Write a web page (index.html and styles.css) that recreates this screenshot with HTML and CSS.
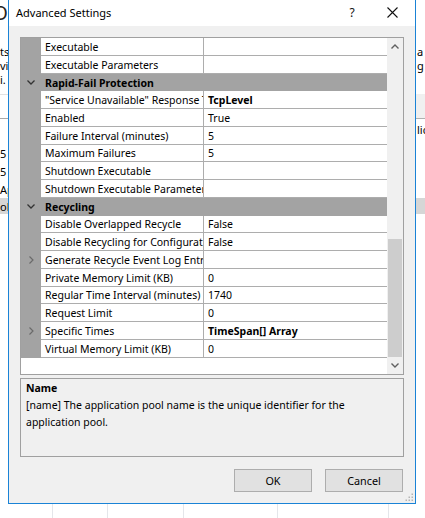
FILE: index.html
```html
<!DOCTYPE html>
<html>
<head>
<meta charset="utf-8">
<link rel="stylesheet" href="styles.css">
</head>
<body>
<div class="screen">
  <div class="bg">
    <div class="bgrow r1"><span class="l big">O</span></div>
    <div class="bgrow r2"></div>
    <div class="bgrow r3"><span class="l">ts</span><span class="r">a</span></div>
    <div class="bgrow r4"><span class="l">vi</span><span class="r">g</span></div>
    <div class="bgrow r5"><span class="l">i.</span></div>
    <div class="bgrow r6"></div>
    <div class="bgrow r7"><span class="l band-l"></span><span class="r band-r"></span></div>
    <div class="bgrow r8"><span class="l"></span><span class="r">lic</span></div>
    <div class="bgrow r9"></div>
    <div class="bgrow r10"><span class="l">5</span></div>
    <div class="bgrow r11"><span class="l">5</span></div>
    <div class="bgrow r12"><span class="l">Ap</span></div>
    <div class="bgrow r13"><span class="l">ol</span></div>
    <div class="bgrow r14"></div>
    <div class="bgrow r15">
      <span class="col c1"></span><span class="col c2"></span><span class="col c3"></span><span class="col c4"></span><span class="col c5"></span>
    </div>
  </div>

  <div class="dialog">
    <div class="titlebar">
      <span class="title">Advanced Settings</span>
      <span class="help">?</span>
      <span class="close">
        <svg width="11" height="11" viewBox="0 0 11 11"><path d="M0.5 0.5 L10.5 10.5 M10.5 0.5 L0.5 10.5" stroke="#111" stroke-width="1.1" fill="none"/></svg>
      </span>
    </div>
    <div class="body">
      <div class="pgrid">
        <div class="rows">
          <div class="row"><span class="gut"></span><span class="name">Executable</span><span class="val"></span></div>
          <div class="row"><span class="gut"></span><span class="name">Executable Parameters</span><span class="val"></span></div>
          <div class="row cat"><span class="gut"><svg width="8" height="5" viewBox="0 0 8 5"><polyline points="0.5,0.5 4,4 7.5,0.5" fill="none" stroke="#333" stroke-width="1.3"/></svg></span><span class="catname">Rapid-Fail Protection</span></div>
          <div class="row"><span class="gut"></span><span class="name">"Service Unavailable" Response Type</span><span class="val b">TcpLevel</span></div>
          <div class="row"><span class="gut"></span><span class="name">Enabled</span><span class="val">True</span></div>
          <div class="row"><span class="gut"></span><span class="name">Failure Interval (minutes)</span><span class="val">5</span></div>
          <div class="row"><span class="gut"></span><span class="name">Maximum Failures</span><span class="val">5</span></div>
          <div class="row"><span class="gut"></span><span class="name">Shutdown Executable</span><span class="val"></span></div>
          <div class="row"><span class="gut"></span><span class="name">Shutdown Executable Parameters</span><span class="val"></span></div>
          <div class="row cat"><span class="gut"><svg width="8" height="5" viewBox="0 0 8 5"><polyline points="0.5,0.5 4,4 7.5,0.5" fill="none" stroke="#333" stroke-width="1.3"/></svg></span><span class="catname">Recycling</span></div>
          <div class="row"><span class="gut"></span><span class="name">Disable Overlapped Recycle</span><span class="val">False</span></div>
          <div class="row"><span class="gut"></span><span class="name">Disable Recycling for Configuration Changes</span><span class="val">False</span></div>
          <div class="row"><span class="gut"><svg width="5" height="8" viewBox="0 0 5 8"><polyline points="0.5,0.5 4,4 0.5,7.5" fill="none" stroke="#6a6a6a" stroke-width="1.2"/></svg></span><span class="name">Generate Recycle Event Log Entry</span><span class="val"></span></div>
          <div class="row"><span class="gut"></span><span class="name">Private Memory Limit (KB)</span><span class="val">0</span></div>
          <div class="row"><span class="gut"></span><span class="name">Regular Time Interval (minutes)</span><span class="val">1740</span></div>
          <div class="row"><span class="gut"></span><span class="name">Request Limit</span><span class="val">0</span></div>
          <div class="row"><span class="gut"><svg width="5" height="8" viewBox="0 0 5 8"><polyline points="0.5,0.5 4,4 0.5,7.5" fill="none" stroke="#6a6a6a" stroke-width="1.2"/></svg></span><span class="name">Specific Times</span><span class="val b">TimeSpan[] Array</span></div>
          <div class="row"><span class="gut"></span><span class="name">Virtual Memory Limit (KB)</span><span class="val">0</span></div>
          <div class="filler"></div>
        </div>
        <div class="scrollbar">
          <div class="sbtn"><svg width="8" height="5" viewBox="0 0 8 5"><polyline points="0.5,4.5 4,1 7.5,4.5" fill="none" stroke="#606060" stroke-width="1.4"/></svg></div>
          <div class="track"><div class="thumb"></div></div>
          <div class="sbtn"><svg width="8" height="5" viewBox="0 0 8 5"><polyline points="0.5,0.5 4,4 7.5,0.5" fill="none" stroke="#606060" stroke-width="1.4"/></svg></div>
        </div>
      </div>
      <div class="desc">
        <div class="dtitle">Name</div>
        <div class="dtext">[name] The application pool name is the unique identifier for the<br>application pool.</div>
      </div>
      <div class="buttons">
        <button class="btn">OK</button>
        <button class="btn">Cancel</button>
      </div>
    </div>
    <svg class="grip" width="10" height="10" viewBox="0 0 10 10">
      <rect x="7.5" y="1.5" width="1.5" height="1.5" fill="#b5b5b5"/>
      <rect x="4.5" y="4.5" width="1.5" height="1.5" fill="#b5b5b5"/>
      <rect x="7.5" y="4.5" width="1.5" height="1.5" fill="#b5b5b5"/>
      <rect x="1.5" y="7.5" width="1.5" height="1.5" fill="#b5b5b5"/>
      <rect x="4.5" y="7.5" width="1.5" height="1.5" fill="#b5b5b5"/>
      <rect x="7.5" y="7.5" width="1.5" height="1.5" fill="#b5b5b5"/>
    </svg>
  </div>
</div>
</body>
</html>
```

FILE: styles.css
```css
html, body {
  margin: 0;
  padding: 0;
  background: #ffffff;
}
body {
  font-family: "Noto Sans", "Open Sans", sans-serif;
  font-size: 10.5px;
  color: #000;
}
.screen {
  position: relative;
  width: 425px;
  height: 518px;
  overflow: hidden;
  background: #fff;
}

/* background window fragments */
.bg {
  display: flex;
  flex-direction: column;
  height: 100%;
}
.bgrow {
  display: flex;
  justify-content: space-between;
  align-items: center;
  flex: none;
}
.bgrow .l {
  width: 8px;
  white-space: nowrap;
  overflow: visible;
  font-size: 11px;
}
.bgrow .r {
  width: 8px;
  padding-left: 2px;
  white-space: nowrap;
  overflow: hidden;
  font-size: 11px;
}
.bgrow .big {
  font-size: 19px;
  margin-left: -7px;
  color: #222;
}
.r1 { height: 26px; }
.r2 { height: 18px; }
.r3 { height: 14px; }
.r4 { height: 14px; }
.r5 { height: 14px; }
.r6 { height: 8px; }
.r7 { height: 25px; align-items: stretch; }
.band-l {
  box-sizing: border-box;
  border-top: 1px solid #e2e2e2;
  border-bottom: 1px solid #a8a8a8;
  background: #fff;
}
.band-r {
  box-sizing: border-box;
  width: 10px !important;
  border-bottom: 1px solid #b0b0b0;
  background: #f0f0f0;
}
.r8 { height: 20px; }
.r9 { height: 6px; }
.r10 { height: 17px; }
.r11 { height: 18px; }
.r12 { height: 18px; }
.r13 { height: 16px; background: #d6d6d6; }
.r14 { flex: 1; }
.r15 {
  height: 14px;
  justify-content: flex-start;
  align-items: stretch;
}
.col {
  box-sizing: border-box;
  border-right: 1px solid #e4e6ea;
}
.c1 { width: 53px; }
.c2 { width: 55px; }
.c3 { width: 76px; }
.c4 { width: 94px; }
.c5 { width: 111px; }

/* dialog window */
.dialog {
  position: absolute;
  left: 8px;
  top: 0;
  width: 408px;
  height: 504px;
  box-sizing: border-box;
  border: 1px solid #1a83d6;
  border-top: none;
  background: #f0f0f0;
  display: flex;
  flex-direction: column;
}
.titlebar {
  height: 26px;
  flex: none;
  background: #fff;
  display: flex;
  align-items: center;
}
.title {
  flex: 1;
  padding-left: 7px;
  padding-bottom: 2px;
  font-size: 11px;
  color: #000;
}
.help {
  width: 14px;
  text-align: center;
  font-size: 12px;
  margin-right: 10px;
  padding-bottom: 2px;
  color: #111;
}
.close {
  width: 46px;
  height: 24px;
  padding-bottom: 2px;
  display: flex;
  align-items: center;
  justify-content: center;
}
.body {
  flex: 1;
  padding: 11px 11px 0 11px;
  display: flex;
  flex-direction: column;
}

/* property grid */
.pgrid {
  height: 338px;
  box-sizing: border-box;
  border: 1px solid #a0a0a0;
  display: flex;
  flex: none;
}
.rows {
  flex: 1;
  background: #fff;
  display: flex;
  flex-direction: column;
  overflow: hidden;
}
.row {
  display: flex;
  height: 17.75px;
  flex: none;
}
.gut {
  width: 20px;
  flex: none;
  background: #a3a3a3;
  display: flex;
  align-items: center;
  justify-content: center;
}
.name, .val {
  box-sizing: border-box;
  border-bottom: 1px solid #adadad;
  padding-left: 4px;
  padding-top: 1px;
  white-space: nowrap;
  overflow: hidden;
  display: flex;
  align-items: center;
}
.name {
  width: 163px;
  flex: none;
  border-right: 1px solid #adadad;
}
.val {
  flex: 1;
}
.b {
  font-weight: bold;
}
.cat {
  background: #a3a3a3;
}
.catname {
  padding-left: 4px;
  padding-top: 1px;
  font-weight: bold;
  display: flex;
  align-items: center;
}
.filler {
  flex: 1;
  background: #fff;
}
.scrollbar {
  width: 16px;
  flex: none;
  background: #f0f0f0;
  display: flex;
  flex-direction: column;
}
.sbtn {
  height: 17px;
  flex: none;
  display: flex;
  align-items: center;
  justify-content: center;
}
.track {
  flex: 1;
  display: flex;
  flex-direction: column;
  justify-content: flex-end;
  align-items: center;
}
.thumb {
  width: 14px;
  height: 118px;
  background: #cdcdcd;
}

/* description */
.desc {
  margin-top: 3px;
  height: 79px;
  box-sizing: border-box;
  border: 1px solid #a0a0a0;
  background: #f0f0f0;
  padding: 1px 5px 0 5px;
  line-height: 17px;
  flex: none;
}
.dtitle {
  font-weight: bold;
}

/* buttons */
.buttons {
  margin-top: 12px;
  display: flex;
  justify-content: flex-end;
  gap: 13px;
  padding-right: 1px;
}
.btn {
  width: 78px;
  height: 23px;
  box-sizing: border-box;
  background: #e1e1e1;
  border: 1px solid #adadad;
  font-family: "Noto Sans", "Open Sans", sans-serif;
  font-size: 10.8px;
  color: #000;
  padding: 0;
  margin: 0;
}
.grip {
  position: absolute;
  right: 1px;
  bottom: 1px;
}
```
